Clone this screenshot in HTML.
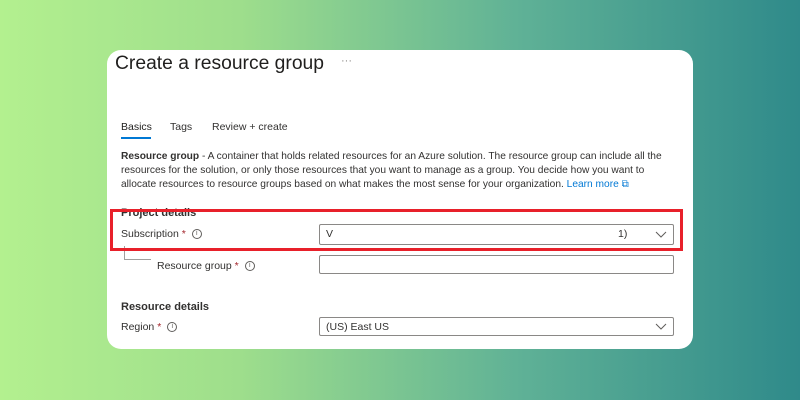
<!DOCTYPE html>
<html><head><meta charset="utf-8"><style>
*{margin:0;padding:0;box-sizing:border-box}
body{width:800px;height:400px;overflow:hidden;background:linear-gradient(90deg,#b3f08f 0%,#9ede8c 30%,#5fb196 65%,#2f8a8a 100%);font-family:"Liberation Sans",sans-serif;color:#323130;position:relative}
.card{position:absolute;left:107px;top:50px;width:586px;height:299px;background:#fff;border-radius:14px}
.a{position:absolute;white-space:nowrap}
.t{font-size:10.5px}
.in{position:absolute;left:212px;width:355px;border:1px solid #8a8886;border-radius:2px;background:#fff}
.chev{position:absolute;right:6px;top:4px}
.star{color:#a4262c}
.i{display:inline-block;width:10px;height:10px;border:1px solid #605e5c;border-radius:50%;font-size:7px;line-height:8px;text-align:center;color:#605e5c;vertical-align:middle;margin-left:6px}
</style></head><body>
<div class="card">
<div class="a" style="left:8px;top:3px;font-size:19.3px;color:#201f1e">Create a resource group</div>
<div class="a" style="left:234px;top:5px;font-size:11px;color:#8a8886">···</div>
<div class="a t" style="left:14px;top:71px;color:#201f1e">Basics</div>
<div class="a" style="left:14px;top:87px;width:30px;height:2px;background:#0078d4"></div>
<div class="a t" style="left:63px;top:71px">Tags</div>
<div class="a t" style="left:105px;top:71px">Review + create</div>
<div class="a t" style="left:14px;top:100px;line-height:14px;font-size:10.2px"><b>Resource group</b> - A container that holds related resources for an Azure solution. The resource group can include all the<br>resources for the solution, or only those resources that you want to manage as a group. You decide how you want to<br>allocate resources to resource groups based on what makes the most sense for your organization. <span style="color:#0078d4">Learn more ⧉</span></div>
<div class="a" style="left:14px;top:157px;font-size:11px;font-weight:bold">Project details</div>
<div class="a t" style="left:14px;top:178px">Subscription <span class="star">*</span><span class="i">i</span></div>
<div class="in" style="top:174px;height:21px"><span class="a t" style="left:6px;top:3px">V</span><span class="a t" style="left:298px;top:3px">1)</span><svg class="chev" width="12" height="10"><path d="M1 3l5 5 5-5" stroke="#605e5c" fill="none"/></svg></div>
<div class="a" style="left:17px;top:196px;width:1px;height:13px;background:#a19f9d"></div>
<div class="a" style="left:17px;top:209px;width:27px;height:1px;background:#a19f9d"></div>
<div class="a t" style="left:50px;top:210px">Resource group <span class="star">*</span><span class="i">i</span></div>
<div class="in" style="top:205px;height:19px"></div>
<div class="a" style="left:14px;top:251px;font-size:11px;font-weight:bold">Resource details</div>
<div class="a t" style="left:14px;top:271px">Region <span class="star">*</span><span class="i">i</span></div>
<div class="in" style="top:267px;height:19px"><span class="a t" style="left:6px;top:3px">(US) East US</span><svg class="chev" style="top:3px" width="12" height="10"><path d="M1 3l5 5 5-5" stroke="#605e5c" fill="none"/></svg></div>
</div>
<div class="a" style="left:110px;top:209px;width:573px;height:42px;border:3px solid #e8202a"></div>
</body></html>
